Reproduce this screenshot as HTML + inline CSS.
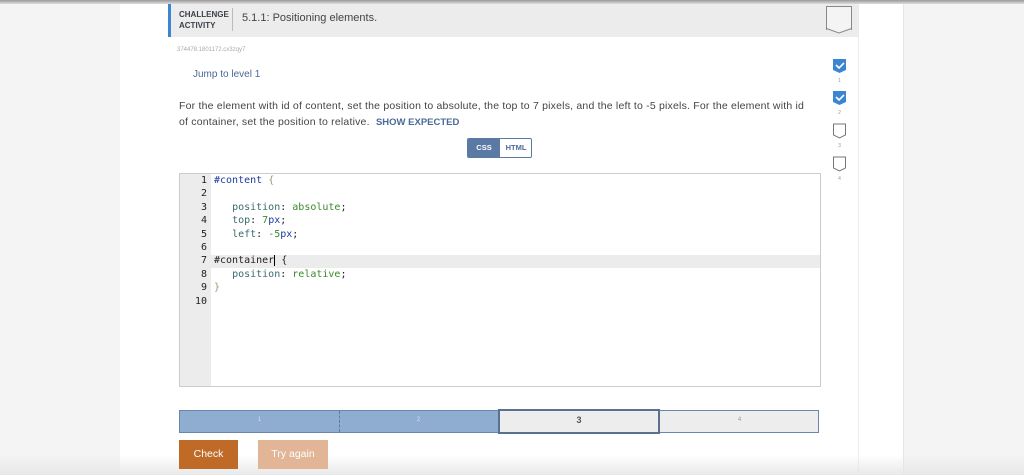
<!DOCTYPE html>
<html><head><style>
*{margin:0;padding:0;box-sizing:border-box}
body{width:1024px;height:475px;overflow:hidden;background:#fff;font-family:"Liberation Sans",sans-serif;position:relative}
.abs{position:absolute}
.mono{font-family:"DejaVu Sans Mono","Liberation Mono",monospace;font-size:10px}
</style></head><body>
<div class="abs" style="left:0;top:0;width:120px;height:475px;background:#f4f4f4"></div>
<div class="abs" style="left:903px;top:0;width:121px;height:475px;background:#f4f4f4;border-left:1px solid #e6e6e6"></div>
<div class="abs" style="left:858px;top:0;width:1px;height:475px;background:#ececec"></div>
<div class="abs" style="left:0;top:0;width:1024px;height:4px;background:linear-gradient(#999,#ddd)"></div>
<div class="abs" style="left:0;top:455px;width:1024px;height:20px;background:linear-gradient(rgba(255,255,255,0),rgba(230,230,230,.9))"></div>
<div class="abs" style="left:168px;top:4px;width:690px;height:33px;background:#ececec;border-left:3px solid #3a87d0"></div>
<div class="abs" style="left:179px;top:9px;font-size:8px;font-weight:bold;color:#3b4048;line-height:11px">CHALLENGE<br>ACTIVITY</div>
<div class="abs" style="left:232px;top:8px;width:1px;height:23px;background:#bbb"></div>
<div class="abs" style="left:242px;top:12px;font-size:11px;color:#444">5.1.1: Positioning elements.</div>
<div class="abs" style="left:826px;top:6px;width:26px;height:24px;border:1px solid #888;border-bottom:none;background:#f4f4f4"></div>
<svg class="abs" style="left:826px;top:28px" width="26" height="6"><path d="M0.5 0.5 L13 5 L25.5 0.5" fill="#f4f4f4" stroke="#888"/></svg>
<div class="abs" style="left:177px;top:47px;font-size:6px;color:#aaa">374478.1801172.cx3zqy7</div>
<div class="abs" style="left:193px;top:69px;font-size:10px;color:#4a6a95">Jump to level 1</div>
<div class="abs" style="left:179px;top:98px;font-size:10.5px;letter-spacing:0.2px;color:#444;line-height:16px;width:630px">For the element with id of content, set the position to absolute, the top to 7 pixels, and the left to -5 pixels. For the element with id of container, set the position to relative. &nbsp;<b style="color:#4a6a95;font-size:9.5px;letter-spacing:0">SHOW EXPECTED</b></div>
<svg class="abs" style="left:830px;top:56px" width="20" height="130">
<path d="M3 3h13v11l-6.5 3l-6.5-3z" fill="#3a87d0"/><path d="M6 9l3 3l5-5" stroke="#fff" stroke-width="1.6" fill="none"/>
<text x="9.5" y="26" font-size="5" fill="#999" text-anchor="middle" font-family="Liberation Sans">1</text>
<path d="M3 35h13v11l-6.5 3l-6.5-3z" fill="#3a87d0"/><path d="M6 41l3 3l5-5" stroke="#fff" stroke-width="1.6" fill="none"/>
<text x="9.5" y="58" font-size="5" fill="#999" text-anchor="middle" font-family="Liberation Sans">2</text>
<path d="M3.5 68h12v11l-6 3l-6-3z" fill="#fff" stroke="#777"/>
<text x="9.5" y="91" font-size="5" fill="#999" text-anchor="middle" font-family="Liberation Sans">3</text>
<path d="M3.5 101h12v11l-6 3l-6-3z" fill="#fff" stroke="#777"/>
<text x="9.5" y="124" font-size="5" fill="#999" text-anchor="middle" font-family="Liberation Sans">4</text>
</svg>
<div class="abs" style="left:467px;top:138px;width:65px;height:20px;border:1px solid #5a7aa5;border-radius:2px;overflow:hidden;font-size:7.5px;font-weight:bold">
<div class="abs" style="left:0;top:0;width:32px;height:18px;background:#5a7aa5;color:#fff;text-align:center;line-height:18px">CSS</div>
<div class="abs" style="left:32px;top:0;width:32px;height:18px;color:#4a6a95;text-align:center;line-height:18px">HTML</div></div>
<div class="abs" style="left:179px;top:173px;width:642px;height:214px;border:1px solid #ccc"></div>
<div class="abs" style="left:180px;top:174px;width:31px;height:212px;background:#ececec"></div>
<div class="abs" style="left:211px;top:255px;width:609px;height:13px;background:#ececec"></div>
<div class="abs mono" style="left:180px;top:174px;width:27px;text-align:right;line-height:13.4px;color:#222">1<br>2<br>3<br>4<br>5<br>6<br>7<br>8<br>9<br>10</div>
<div class="abs mono" style="left:214px;top:174px;line-height:13.4px;white-space:pre;color:#222"><span style="color:#1a3aa0">#content</span> <span style="color:#997">{</span>

   <span style="color:#3a6a6a">position</span>: <span style="color:#3a8a2a">absolute</span>;
   <span style="color:#3a6a6a">top</span>: <span style="color:#3a8a2a">7</span><span style="color:#1a3aa0">px</span>;
   <span style="color:#3a6a6a">left</span>: <span style="color:#3a8a2a">-5</span><span style="color:#1a3aa0">px</span>;

#container<span style="border-left:1px solid #000"></span> <span style="color:#222">{</span>
   <span style="color:#3a6a6a">position</span>: <span style="color:#3a8a2a">relative</span>;
<span style="color:#997">}</span>
</div>
<div class="abs" style="left:179px;top:410px;width:640px;height:23px;border:1px solid #6a86ad;background:#ededed"></div>
<div class="abs" style="left:180px;top:411px;width:318px;height:21px;background:#8fadd0"></div>
<div class="abs" style="left:339px;top:411px;width:0;height:21px;border-left:1px dashed #5a7aa5"></div>
<div class="abs" style="left:498px;top:409px;width:162px;height:25px;border:2px solid #5a7090;background:#ededed"></div>
<div class="abs" style="top:417px;left:180px;width:159px;text-align:center;font-size:6px;color:#dde">1</div>
<div class="abs" style="top:417px;left:339px;width:159px;text-align:center;font-size:6px;color:#dde">2</div>
<div class="abs" style="top:415px;left:498px;width:162px;text-align:center;font-size:9px;font-weight:bold;color:#555">3</div>
<div class="abs" style="top:417px;left:660px;width:159px;text-align:center;font-size:6px;color:#999">4</div>
<div class="abs" style="left:179px;top:440px;width:59px;height:29px;background:#c06a28;color:#fff;font-size:10.5px;text-align:center;line-height:29px">Check</div>
<div class="abs" style="left:258px;top:440px;width:70px;height:29px;background:#e2b596;color:#fff;font-size:10.5px;text-align:center;line-height:29px">Try again</div>
</body></html>
